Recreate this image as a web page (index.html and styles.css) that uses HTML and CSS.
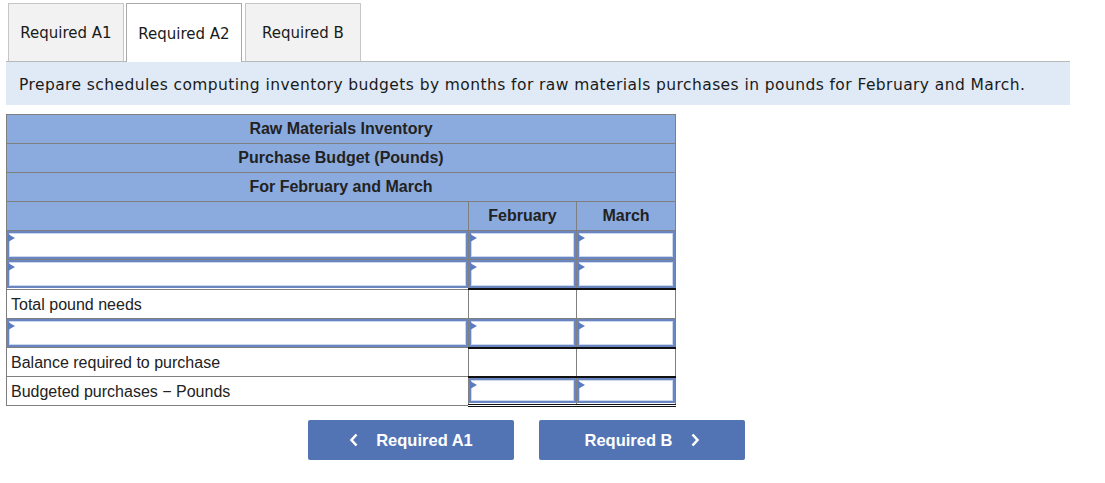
FILE: index.html
```html
<!DOCTYPE html>
<html lang="en">
<head>
  <meta charset="UTF-8">
  <title>Required A2</title>
  <link rel="stylesheet" href="styles.css">
</head>
<body>
  <div class="page">
    <div class="tabs">
      <div class="tab">Required A1</div>
      <div class="tab active">Required A2</div>
      <div class="tab">Required B</div>
    </div>

    <div class="instruction">Prepare schedules computing inventory budgets by months for raw materials purchases in pounds for February and March.</div>

    <table class="budget">
      <colgroup>
        <col class="label-col">
        <col class="feb-col">
        <col class="mar-col">
      </colgroup>
      <tr class="title"><th colspan="3">Raw Materials Inventory</th></tr>
      <tr class="title"><th colspan="3">Purchase Budget (Pounds)</th></tr>
      <tr class="title"><th colspan="3">For February and March</th></tr>
      <tr class="cols">
        <th></th>
        <th>February</th>
        <th>March</th>
      </tr>
      <tr>
        <td><div class="input"></div></td>
        <td><div class="input"></div></td>
        <td><div class="input"></div></td>
      </tr>
      <tr>
        <td><div class="input"></div></td>
        <td><div class="input"></div></td>
        <td><div class="input"></div></td>
      </tr>
      <tr>
        <td class="text">Total pound needs</td>
        <td class="total"></td>
        <td class="total"></td>
      </tr>
      <tr>
        <td><div class="input"></div></td>
        <td><div class="input"></div></td>
        <td><div class="input"></div></td>
      </tr>
      <tr>
        <td class="text">Balance required to purchase</td>
        <td class="total"></td>
        <td class="total"></td>
      </tr>
      <tr>
        <td class="text">Budgeted purchases &minus; Pounds</td>
        <td class="total final"><div class="input"></div></td>
        <td class="total final"><div class="input"></div></td>
      </tr>
    </table>

    <div class="nav">
      <button class="nav-btn">
        <svg width="10" height="14" viewBox="0 0 10 14"><polyline points="7.5,1.5 2.5,7 7.5,12.5" fill="none" stroke="#fff" stroke-width="2.6"/></svg>
        <span>Required A1</span>
      </button>
      <button class="nav-btn">
        <span>Required B</span>
        <svg width="10" height="14" viewBox="0 0 10 14"><polyline points="2.5,1.5 7.5,7 2.5,12.5" fill="none" stroke="#fff" stroke-width="2.6"/></svg>
      </button>
    </div>
  </div>
</body>
</html>
```

FILE: styles.css
```css
body {
  margin: 0;
  background: #fff;
  font-family: "Liberation Sans", Arial, sans-serif;
  color: #222;
}

.page {
  padding: 3px 0 0 6px;
}

.tabs {
  display: flex;
  gap: 2px;
  padding-left: 2px;
  width: 1062px;
  border-bottom: 1px solid #b9b9b9;
}

.tab {
  width: 114px;
  height: 56px;
  padding-top: 1px;
  display: flex;
  align-items: center;
  justify-content: center;
  background: #f2f2f2;
  border: 1px solid #c6c6c6;
  border-bottom: none;
  font-family: "DejaVu Sans", Verdana, sans-serif;
  font-size: 15px;
  color: #1a1a1a;
}

.tab.active {
  background: #fff;
  border-color: #a9a9a9;
  height: 57px;
  margin-bottom: -1px;
}

.tab:last-child {
  margin-left: 1px;
}

.instruction {
  width: 1051px;
  height: 41px;
  padding: 2px 0 0 13px;
  display: flex;
  align-items: center;
  background: #dfeaf6;
  font-family: "DejaVu Sans", Verdana, sans-serif;
  font-size: 15.5px;
  letter-spacing: 0.42px;
  color: #1a1a1a;
}

.budget {
  margin-top: 9px;
  border-collapse: collapse;
  table-layout: fixed;
  width: 669px;
  font-size: 16px;
}

.label-col {
  width: 462px;
}

.feb-col {
  width: 108px;
}

.mar-col {
  width: 99px;
}

.budget th,
.budget td {
  border: 1px solid #7f7f7f;
  height: 28px;
  padding: 0;
  box-sizing: border-box;
}

.budget tr {
  height: 29px;
}

.budget th {
  background: #8babdf;
  font-weight: bold;
  color: #222;
  text-align: center;
}

.budget td.text {
  padding: 2px 0 0 4px;
  color: #222;
}

.budget td.total {
  border-top: 2px solid #111;
}

.budget td.final {
  border-bottom: 3px double #111;
}

.input {
  position: relative;
  height: 24px;
  border: 2px solid #6a86c1;
  box-shadow: inset 0 0 0 1px #cbd7ef;
  background: #fff;
}

.input::before {
  content: "";
  position: absolute;
  left: -1px;
  top: 1px;
  border-top: 4px solid transparent;
  border-bottom: 4px solid transparent;
  border-left: 7px solid #5b7cc0;
}

.final .input {
  height: 21px;
}

.nav {
  width: 1041px;
  display: flex;
  justify-content: center;
  gap: 25px;
  margin-top: 13px;
}

.nav-btn {
  width: 206px;
  height: 40px;
  display: flex;
  align-items: center;
  justify-content: center;
  gap: 17px;
  background: #5273b4;
  border: none;
  border-radius: 2px;
  color: #fff;
  font-family: "Liberation Sans", Arial, sans-serif;
  font-weight: bold;
  font-size: 16.5px;
}
```
